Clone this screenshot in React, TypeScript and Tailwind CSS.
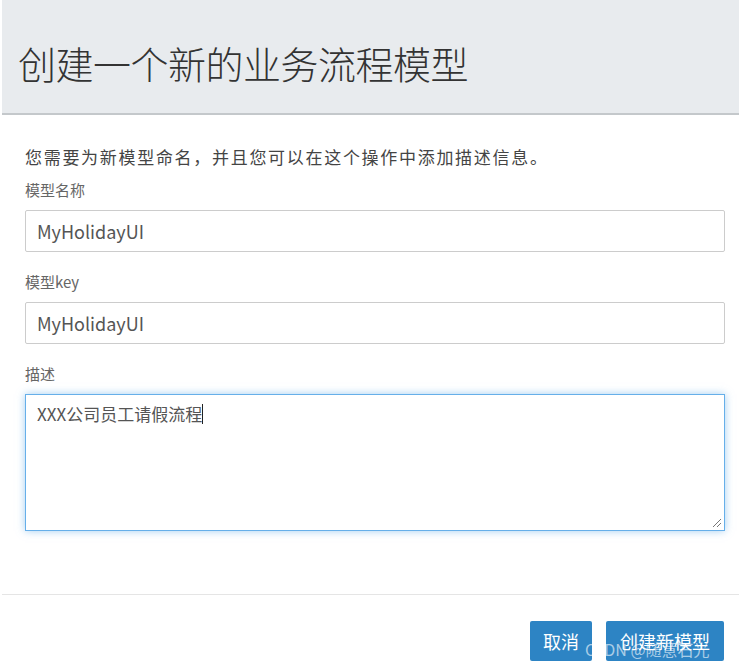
const font = {
	fontFamily: '"Noto Sans CJK SC", "Open Sans", "Noto Sans", sans-serif',
};

function Field({ label, value }: { label: string; value: string }) {
	return (
		<div className="flex flex-col">
			<label className="text-[15px] leading-[24px] text-[#666]">{label}</label>
			<div className="mt-[8px] h-[42px] border border-[#ccc] rounded-[2px] flex items-center px-[11px] text-[18px] text-[#555]">
				{value}
			</div>
		</div>
	);
}

export default function App() {
	return (
		<div
			className="relative w-[739px] h-[670px] bg-white flex flex-col overflow-hidden"
			style={font}
		>
			<header className="ml-[2px] h-[115px] bg-[#e8ebee] border-b-2 border-[#c4c8cb] flex items-center pl-[16px] pt-[12px]">
				<h1 className="text-[38px] font-light text-[#333] tracking-[-0.5px]">
					创建一个新的业务流程模型
				</h1>
			</header>

			<main className="pl-[25px] pr-[14px] pt-[30px] flex flex-col">
				<p className="text-[17px] leading-[24px] tracking-[1.7px] text-[#444]">
					您需要为新模型命名，并且您可以在这个操作中添加描述信息。
				</p>
				<div className="mt-[9px] flex flex-col gap-[18px]">
					<Field label="模型名称" value="MyHolidayUI" />
					<Field label="模型key" value="MyHolidayUI" />
					<div className="flex flex-col">
						<label className="text-[15px] leading-[24px] text-[#666]">描述</label>
						<div className="mt-[8px] h-[137px] border border-[#66afe9] shadow-[0_0_8px_rgba(102,175,233,0.6)] flex flex-col justify-between px-[11px] pt-[7px] pb-[2px]">
							<div className="text-[17px] leading-[24px] text-[#555] flex items-center">
								<span>XXX公司员工请假流程</span>
								<span className="inline-block w-[1px] h-[20px] bg-[#222]" />
							</div>
							<div className="flex justify-end -mr-[9px]">
								<svg width="12" height="12" viewBox="0 0 12 12">
									<path d="M11 3 L3 11 M11 7 L7 11" stroke="#777" strokeWidth="1" />
								</svg>
							</div>
						</div>
					</div>
				</div>
			</main>

			<div className="mt-[63px] ml-[2px] border-t border-[#e5e5e5]" />

			<footer className="flex justify-end gap-[14px] pr-[15px] pt-[26px]">
				<button className="h-[40px] px-[13px] bg-[#2d84c4] text-white text-[18px] rounded-[2px]">
					取消
				</button>
				<button className="h-[40px] px-[14px] bg-[#2d84c4] text-white text-[18px] rounded-[2px]">
					创建新模型
				</button>
			</footer>

			<div className="absolute left-[585px] top-[640px] text-[16px] leading-[18px] text-white/60 pointer-events-none">
				CSDN @随意石光
			</div>
		</div>
	);
}
